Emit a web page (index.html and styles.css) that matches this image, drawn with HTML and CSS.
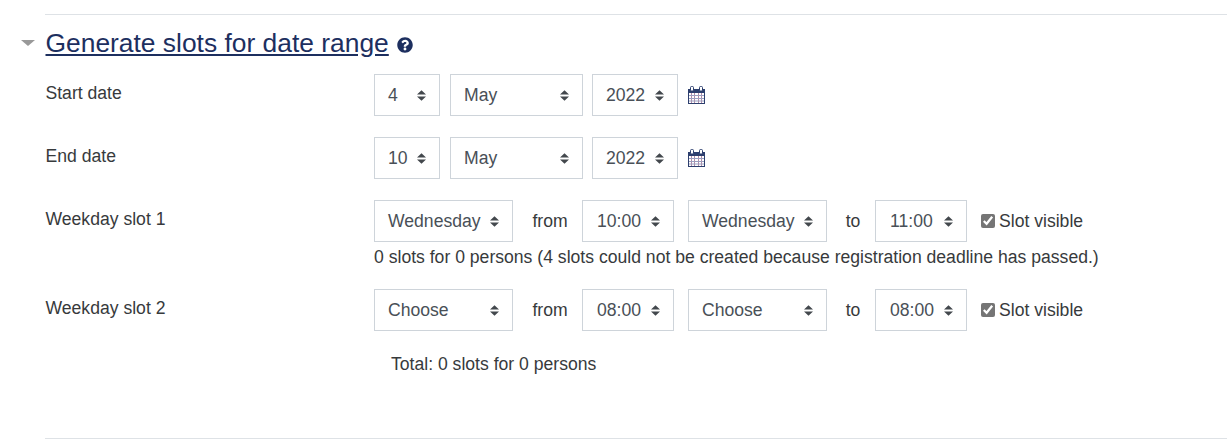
FILE: index.html
```html
<!DOCTYPE html>
<html lang="en">
<head>
<meta charset="utf-8">
<title>Generate slots for date range</title>
<link rel="stylesheet" href="styles.css">
</head>
<body>
<svg class="defs" width="0" height="0" aria-hidden="true">
  <symbol id="updown" viewBox="0 0 9 11"><path d="M0 4.6L4.5 0.2L9 4.6ZM0 6.4L9 6.4L4.5 10.8Z"/></symbol>
  <symbol id="cal" viewBox="0 0 17 18">
    <rect x="0.5" y="3.5" width="16" height="14" fill="#fff" stroke="#2d3f6e" stroke-width="1"/>
    <rect x="0.5" y="3" width="16" height="4" fill="#2d3f6e"/>
    <path d="M3.5 7v10M6.5 7v10M10.5 7v10M13.5 7v10" stroke="#b48aa6" stroke-width="1" fill="none"/>
    <path d="M1 9.5h15M1 12.5h15M1 15h15" stroke="#9a9fc0" stroke-width="1" fill="none"/>
    <rect x="2.5" y="0.5" width="3" height="4.5" rx="1" fill="#fff" stroke="#2d3f6e" stroke-width="1"/>
    <rect x="11.5" y="0.5" width="3" height="4.5" rx="1" fill="#fff" stroke="#2d3f6e" stroke-width="1"/>
  </symbol>
</svg>
<main class="page">
  <section class="section">
    <header class="section-head">
      <span class="caret"></span>
      <h3 class="section-title">Generate slots for date range</h3>
      <svg class="help" viewBox="0 0 512 512" aria-hidden="true"><path d="M504 256c0 136.997-111.043 248-248 248S8 392.997 8 256C8 119.083 119.043 8 256 8s248 111.083 248 248zM262.655 90c-54.497 0-89.255 22.957-116.549 63.758-3.536 5.286-2.353 12.415 2.715 16.258l34.699 26.31c5.205 3.947 12.621 3.008 16.665-2.122 17.864-22.658 30.113-35.797 57.303-35.797 20.429 0 45.698 13.148 45.698 32.958 0 14.976-12.363 22.667-32.534 33.976C247.128 238.528 216 254.941 216 296v4c0 6.627 5.373 12 12 12h56c6.627 0 12-5.373 12-12v-1.333c0-28.462 83.186-29.647 83.186-106.667 0-58.002-60.165-102-116.531-102zM256 338c-25.365 0-46 20.635-46 46 0 25.364 20.635 46 46 46s46-20.636 46-46c0-25.365-20.635-46-46-46z"/></svg>
    </header>

    <div class="row row-date">
      <div class="label">Start date</div>
      <div class="controls">
        <div class="select w-day"><span>4</span><svg class="arrows"><use href="#updown"/></svg></div>
        <div class="select w-month"><span>May</span><svg class="arrows"><use href="#updown"/></svg></div>
        <div class="select w-year"><span>2022</span><svg class="arrows"><use href="#updown"/></svg></div>
        <svg class="cal"><use href="#cal"/></svg>
      </div>
    </div>

    <div class="row row-date">
      <div class="label">End date</div>
      <div class="controls">
        <div class="select w-day"><span>10</span><svg class="arrows"><use href="#updown"/></svg></div>
        <div class="select w-month"><span>May</span><svg class="arrows"><use href="#updown"/></svg></div>
        <div class="select w-year"><span>2022</span><svg class="arrows"><use href="#updown"/></svg></div>
        <svg class="cal"><use href="#cal"/></svg>
      </div>
    </div>

    <div class="row row-slot1">
      <div class="label">Weekday slot 1</div>
      <div class="controls-stack">
        <div class="controls">
          <div class="select w-wd"><span>Wednesday</span><svg class="arrows"><use href="#updown"/></svg></div>
          <span class="word w-from">from</span>
          <div class="select w-time"><span>10:00</span><svg class="arrows"><use href="#updown"/></svg></div>
          <div class="select w-wd2"><span>Wednesday</span><svg class="arrows"><use href="#updown"/></svg></div>
          <span class="word w-to">to</span>
          <div class="select w-time"><span>11:00</span><svg class="arrows"><use href="#updown"/></svg></div>
          <label class="check"><input type="checkbox" checked>Slot visible</label>
        </div>
        <p class="note">0 slots for 0 persons (4 slots could not be created because registration deadline has passed.)</p>
      </div>
    </div>

    <div class="row row-slot2">
      <div class="label">Weekday slot 2</div>
      <div class="controls">
        <div class="select w-wd"><span>Choose</span><svg class="arrows"><use href="#updown"/></svg></div>
        <span class="word w-from">from</span>
        <div class="select w-time"><span>08:00</span><svg class="arrows"><use href="#updown"/></svg></div>
        <div class="select w-wd2"><span>Choose</span><svg class="arrows"><use href="#updown"/></svg></div>
        <span class="word w-to">to</span>
        <div class="select w-time"><span>08:00</span><svg class="arrows"><use href="#updown"/></svg></div>
        <label class="check"><input type="checkbox" checked>Slot visible</label>
      </div>
    </div>

    <p class="total">Total: 0 slots for 0 persons</p>
  </section>
</main>
</body>
</html>
```

FILE: styles.css
```css
* { box-sizing: border-box; }
html, body { margin: 0; padding: 0; }
body {
  height: 439px;
  overflow: hidden;
  background: #fff;
  color: #373a3c;
  font-family: "Liberation Sans", Arial, sans-serif;
  font-size: 17.6px;
  line-height: 24px;
}
.defs { position: absolute; }
.page { padding-top: 14px; }
.section {
  margin-left: 45px;
  height: 425px;
  border-top: 1px solid #dee2e6;
  border-bottom: 1px solid #dee2e6;
}
.section-head {
  display: flex;
  align-items: center;
  height: 59px;
  position: relative;
}
.caret {
  position: absolute;
  left: -24px;
  top: 25px;
  width: 0;
  height: 0;
  border-left: 7px solid transparent;
  border-right: 7px solid transparent;
  border-top: 6px solid #999;
}
.section-title {
  margin: 0 0 4px;
  padding-left: 0.5px;
  font-size: 26.4px;
  font-weight: 400;
  line-height: 30px;
  color: #1d2f5f;
  text-decoration: underline;
}
.help { width: 16px; height: 16px; margin-left: 8.5px; fill: #1d2f5f; }
.row { display: flex; }
.row-date { height: 63px; }
.row-slot1 { height: 89px; }
.row-slot2 { height: 61px; }
.label { width: 329px; padding-top: 7px; padding-left: 0.5px; }
.controls { display: flex; align-items: center; height: 42px; }
.controls-stack { display: flex; flex-direction: column; }
.select {
  display: flex;
  align-items: center;
  justify-content: space-between;
  height: 42px;
  padding: 0 13px 0 13px;
  border: 1px solid #ced4da;
  background: #fff;
  color: #495057;
}
.arrows { width: 9px; height: 11px; margin-top: 1px; fill: #43484d; flex: none; }
.w-day { width: 66px; margin-right: 10px; }
.w-month { width: 133px; margin-right: 9px; }
.w-year { width: 86px; margin-right: 10px; }
.w-wd { width: 139px; }
.w-wd2 { width: 139px; margin-left: 14px; }
.w-time { width: 92px; padding-left: 14px; }
.word { text-align: center; }
.w-from { width: 69px; padding-left: 5px; }
.w-to { width: 48px; padding-left: 4px; }
.cal { width: 17px; height: 18px; }
.check { display: flex; align-items: center; margin-left: 14px; }
.check input { width: 14px; height: 14px; margin: 0 4px 0 0; accent-color: #757575; }
.note { margin: 3px 0 0; }
.total { margin: 2px 0 0 346px; }
```
